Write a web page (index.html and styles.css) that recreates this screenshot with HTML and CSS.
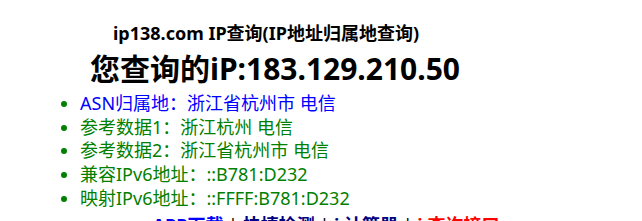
FILE: index.html
```html
<!DOCTYPE html>
<html lang="zh-CN">
<head>
    <meta charset="UTF-8">
    <title>ip138.com IP查询</title>
    <link rel="stylesheet" href="styles.css">
</head>
<body>
    <div class="wrap">
        <div class="title">ip138.com IP查询(IP地址归属地查询)</div>
        <h1>您查询的iP:183.129.210.50</h1>
        <ul class="info">
            <li><span class="asn">ASN归属地：浙江省杭州市 电信</span></li>
            <li>参考数据1：浙江杭州 电信</li>
            <li>参考数据2：浙江省杭州市 电信</li>
            <li>兼容IPv6地址：::B781:D232</li>
            <li>映射IPv6地址：::FFFF:B781:D232</li>
        </ul>
    </div>
    <div class="links">
        <a href="#" class="app">APP下载</a> | <a href="#">快捷检测</a> | <a href="#">i 计算器</a> | <a href="#" class="red">i 查询接口</a>
    </div>
</body>
</html>
```

FILE: styles.css
```css
body {
    margin: 8px;
    font-family: "Noto Sans", "Noto Sans CJK SC", sans-serif;
    color: #000;
}

.wrap {
    width: 516px;
}

.title {
    text-align: center;
    font-size: 18px;
    font-weight: bold;
    padding-top: 12px;
    line-height: 26px;
}

h1 {
    margin: 0;
    padding-left: 18px;
    text-align: center;
    font-size: 30px;
    line-height: 46px;
}

.info {
    margin: 0;
    padding-left: 72px;
    color: #008000;
    font-size: 18px;
    line-height: 23.7px;
}

.asn {
    color: #0000ff;
}

.links {
    margin-top: 4px;
    padding-left: 10px;
    text-align: center;
    font-size: 18px;
    line-height: 20px;
}

.links a {
    color: #000080;
    font-weight: bold;
    text-decoration: none;
}

.links a.app {
    color: #0000ff;
}

.links a.red {
    color: #ff0000;
}
```
